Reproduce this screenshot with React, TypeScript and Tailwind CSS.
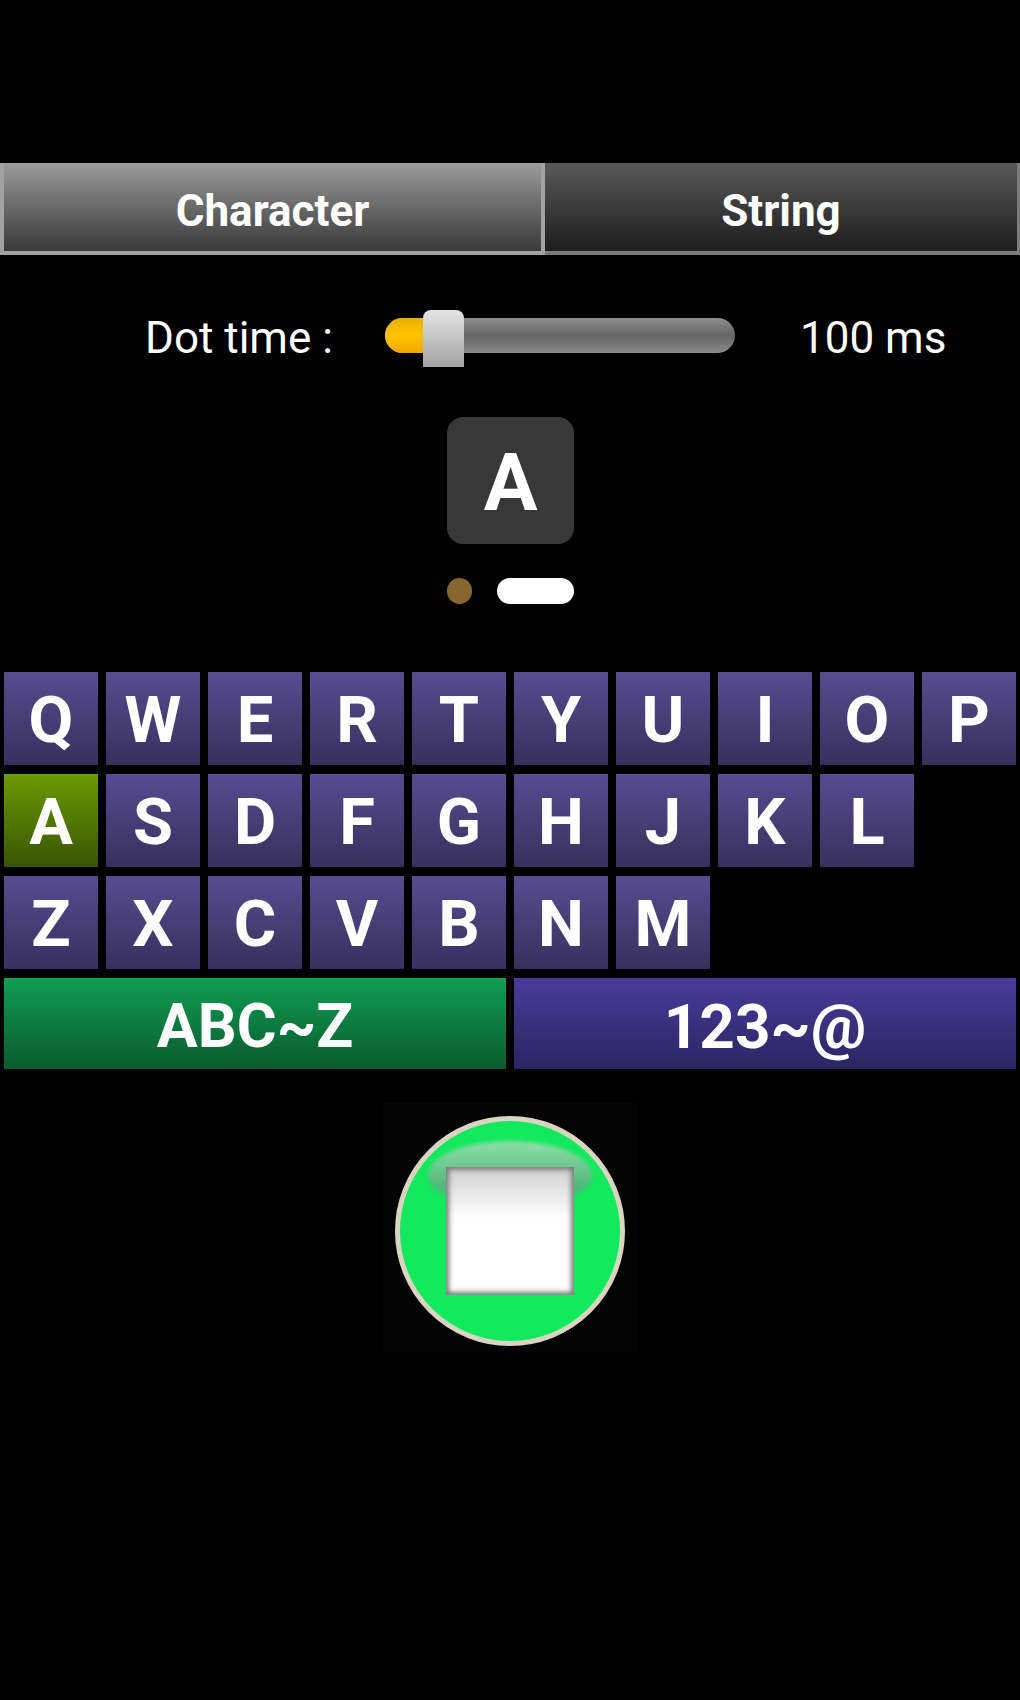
const ROWS = ["QWERTYUIOP", "ASDFGHJKL", "ZXCVBNM"];

function Key({ letter }: { letter: string }) {
  const active = letter === "A";
  return (
    <div
      className={`w-[94px] h-[93px] flex items-center justify-center pt-[3px] text-white text-[65px] font-bold leading-none ${
        active
          ? "bg-gradient-to-b from-[#6c9a00] to-[#395504]"
          : "bg-gradient-to-b from-[#584c90] to-[#37305c]"
      }`}
    >
      {letter}
    </div>
  );
}

function Slider() {
  return (
    <div className="relative w-[350px] h-[35px] rounded-full bg-gradient-to-b from-[#8f8f8f] via-[#636363] to-[#8a8a8a]">
      <div className="absolute left-0 top-0 h-[35px] w-[45px] rounded-l-full bg-gradient-to-b from-[#e8b000] via-[#ffc400] to-[#f0a800]" />
      <div className="absolute left-[38px] top-[-8px] w-[41px] h-[57px] rounded-t-[8px] bg-gradient-to-b from-[#e4e4e4] to-[#a4a4a4]" />
    </div>
  );
}

function StopButton() {
  return (
    <div className="w-[254px] h-[250px] flex items-start justify-center pt-[14px] bg-[#030303]">
      <div className="relative w-[230px] h-[230px] rounded-full border-[5px] border-[#d9d5c2] bg-[#12e95d] flex items-center justify-center overflow-hidden">
        <div className="absolute left-[28px] top-[20px] w-[164px] h-[68px] rounded-[50%] blur-[2px] bg-gradient-to-b from-[#90dfab] via-[#4fb578] via-[70%] to-[#12e95d]" />
        <div className="relative w-[128px] h-[128px] bg-gradient-to-b from-[#cfcfcf] via-[#ffffff] via-[40%] to-[#ffffff] shadow-[inset_0_0_5px_3px_#7c7c7c]" />
      </div>
    </div>
  );
}

export default function App() {
  return (
    <div
      className="w-[1020px] h-[1700px] bg-black text-white pt-[163px] overflow-hidden"
      style={{ fontFamily: "Roboto, sans-serif" }}
    >
      <div className="flex h-[92px] text-[44px] font-bold">
        <div className="w-[545px] flex items-center justify-center pt-[7px] border-x-[4px] border-b-[4px] border-[#a2a2a2] bg-gradient-to-b from-[#9c9c9c] to-[#3a3a3a]">
          Character
        </div>
        <div className="flex-1 flex items-center justify-center pt-[7px] border-b-[4px] border-r-[3px] border-[#7c7c7c] bg-gradient-to-b from-[#5a5a5a] to-[#1e1e1e]">
          String
        </div>
      </div>

      <div className="flex items-center h-[40px] mt-[60px] text-[44px] leading-none">
        <span className="w-[385px] pl-[145px] pt-[6px]">Dot time :</span>
        <Slider />
        <span className="ml-[65px] pt-[6px]">100 ms</span>
      </div>

      <div className="w-[127px] h-[127px] mt-[62px] ml-[447px] pt-[5px] rounded-[16px] bg-[#383838] flex items-center justify-center text-[80px] font-bold leading-none">
        A
      </div>

      <div className="flex items-center gap-[25px] mt-[34px] ml-[447px]">
        <div className="w-[25px] h-[26px] rounded-full bg-[#86672f]" />
        <div className="w-[77px] h-[26px] rounded-full bg-white" />
      </div>

      <div className="flex flex-col gap-[9px] mt-[68px] pl-[4px]">
        {ROWS.map((row) => (
          <div key={row} className="flex gap-[8px]">
            {row.split("").map((c) => (
              <Key key={c} letter={c} />
            ))}
          </div>
        ))}
        <div className="flex gap-[8px] font-bold">
          <div className="w-[502px] h-[91px] flex items-center justify-center pt-[6px] text-[61px] bg-gradient-to-b from-[#0f9d54] to-[#0b5a2e]">
            ABC~Z
          </div>
          <div className="w-[502px] h-[91px] flex items-center justify-center pt-[6px] text-[62px] bg-gradient-to-b from-[#4a3b9c] to-[#2a2560]">
            123~@
          </div>
        </div>
      </div>

      <div className="mt-[33px] ml-[383px]">
        <StopButton />
      </div>
    </div>
  );
}
